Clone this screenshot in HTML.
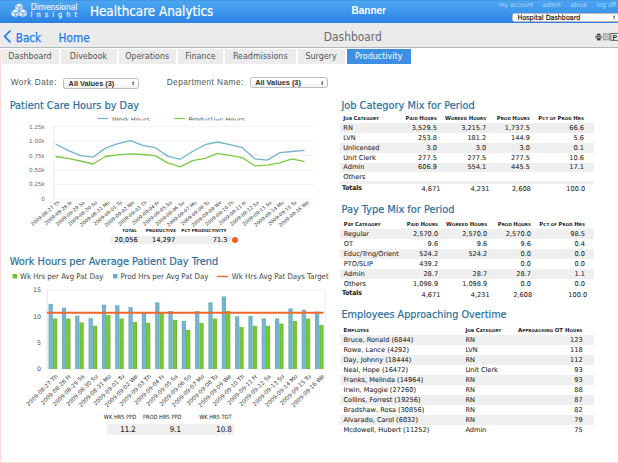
<!DOCTYPE html>
<html lang="en"><head><meta charset="utf-8"><title>Healthcare Analytics - Dashboard</title>
<style>
html,body{margin:0;padding:0;background:#fff;}
body{width:618px;height:463px;overflow:hidden;position:relative;font-family:'DejaVu Sans', 'Liberation Sans', sans-serif;color:#333;}
#page{position:absolute;left:0;top:0;width:618px;height:463px;overflow:hidden;background:#fff;}
#page *{box-sizing:border-box;}
.abs{position:absolute;white-space:nowrap;}
#top{position:absolute;left:0;top:0;width:618px;height:22.5px;background:linear-gradient(#3f8fe0 0,#4ba6f0 1.2px,#3c95eb 55%,#2b7fe1);}
#bar{position:absolute;left:0;top:22.5px;width:618px;height:25.5px;background:#ebebeb;border-bottom:1.6px solid #aebabb;}
#frame{position:absolute;left:0;top:50px;width:618px;height:413px;border-left:1.2px solid #fcdada;border-bottom:1.5px solid #fddcdc;}
.tab{position:absolute;top:49px;height:15px;background:#ececec;color:#555;font-family:'DejaVu Sans Condensed','DejaVu Sans',sans-serif;font-stretch:condensed;font-size:8.9px;line-height:15px;text-align:center;white-space:nowrap;}
.tab.on{background:#3d8fe3;color:#fff;}
.ttl{position:absolute;white-space:nowrap;color:#2a6f9f;font-family:'DejaVu Sans Condensed','DejaVu Sans',sans-serif;font-stretch:condensed;font-size:10.9px;line-height:14px;-webkit-text-stroke:0.2px #2a6f9f;}
.c{position:absolute;white-space:nowrap;line-height:10px;color:#2c2c2c;-webkit-text-stroke:0.08px #2c2c2c;}
.r{text-align:right;}
.b{font-weight:bold;color:#222;}
.k{color:#222;-webkit-text-stroke:0.12px #222;}
.h{position:absolute;white-space:nowrap;font-weight:bold;color:#222;font-size:4.1px;line-height:8px;text-transform:uppercase;letter-spacing:0.05px;}
.h b{font-size:5.4px;font-weight:bold;}
.st{position:absolute;background:#efefef;}
.sel{position:absolute;background:#fff;border:0.8px solid #bcbcbc;border-radius:2.5px;font-family:'Liberation Sans', sans-serif;color:#2e2e2e;white-space:nowrap;}
svg text{font-family:'DejaVu Sans', 'Liberation Sans', sans-serif;}
svg text.lg{font-family:'DejaVu Sans Condensed', 'DejaVu Sans', sans-serif;font-stretch:condensed;}
</style></head><body><div id="page">
<div id="top">
  <svg class="abs" style="left:10.6px;top:3.4px" width="16.4" height="15" viewBox="0 0 16.4 15"><g stroke="#3a86e6" stroke-width="0.45" stroke-linejoin="round"><path d="M8.2 0.2 L12.399999999999999 2.3000000000000003 L8.2 4.4 L3.999999999999999 2.3000000000000003Z" fill="#f4f9ff"/><path d="M3.999999999999999 2.3000000000000003 L8.2 4.4 L8.2 8.8 L3.999999999999999 6.700000000000001Z" fill="#dbeaff"/><path d="M12.399999999999999 2.3000000000000003 L8.2 4.4 L8.2 8.8 L12.399999999999999 6.700000000000001Z" fill="#b9d6fa"/><path d="M4.4 6 L8.600000000000001 8.1 L4.4 10.2 L0.20000000000000018 8.1Z" fill="#f4f9ff"/><path d="M0.20000000000000018 8.1 L4.4 10.2 L4.4 14.6 L0.20000000000000018 12.5Z" fill="#dbeaff"/><path d="M8.600000000000001 8.1 L4.4 10.2 L4.4 14.6 L8.600000000000001 12.5Z" fill="#b9d6fa"/><path d="M12 6 L16.2 8.1 L12 10.2 L7.8 8.1Z" fill="#f4f9ff"/><path d="M7.8 8.1 L12 10.2 L12 14.6 L7.8 12.5Z" fill="#dbeaff"/><path d="M16.2 8.1 L12 10.2 L12 14.6 L16.2 12.5Z" fill="#b9d6fa"/></g></svg>
  <div class="abs" style="left:30.7px;top:2.8px;font-family:'DejaVu Sans Condensed', 'DejaVu Sans', sans-serif;font-stretch:condensed;font-size:8.4px;line-height:9px;color:#e6f1ff;-webkit-text-stroke:0.2px #e6f1ff">Dimensional</div>
  <div class="abs" style="left:30.5px;top:10.3px;font-family:'DejaVu Sans Condensed', 'DejaVu Sans', sans-serif;font-stretch:condensed;font-size:7.4px;line-height:9px;color:#e6f1ff;letter-spacing:4px;-webkit-text-stroke:0.2px #e6f1ff">Insight</div>
  <div class="abs" style="left:90px;top:2.8px;font-family:'DejaVu Sans Condensed', 'DejaVu Sans', sans-serif;font-stretch:condensed;font-size:13.3px;line-height:18px;color:#fff;-webkit-text-stroke:0.2px #fff">Healthcare Analytics</div>
  <div class="abs" style="left:351.5px;top:4px;font-family:'Liberation Sans', sans-serif;font-size:10px;line-height:13px;color:#fff;font-weight:bold">Banner</div>
  <div class="abs" style="left:499px;top:1px;font-family:'DejaVu Sans Condensed', 'DejaVu Sans', sans-serif;font-stretch:condensed;font-size:6.45px;line-height:9px;color:#b4d6ff">my account</div><div class="abs" style="left:542.6px;top:1px;font-family:'DejaVu Sans Condensed', 'DejaVu Sans', sans-serif;font-stretch:condensed;font-size:6.45px;line-height:9px;color:#b4d6ff">admin</div><div class="abs" style="left:570.4px;top:1px;font-family:'DejaVu Sans Condensed', 'DejaVu Sans', sans-serif;font-stretch:condensed;font-size:6.45px;line-height:9px;color:#b4d6ff">about</div><div class="abs" style="left:596.5px;top:1px;font-family:'DejaVu Sans Condensed', 'DejaVu Sans', sans-serif;font-stretch:condensed;font-size:6.9px;line-height:9px;color:#b4d6ff">log off</div>
  <div class="sel" style="left:512px;top:12.6px;width:108px;height:9.2px;font-size:7.1px;line-height:7.2px;padding-left:4.6px;font-family:'DejaVu Sans Condensed', 'DejaVu Sans', sans-serif;font-stretch:condensed;font-weight:normal;color:#111;-webkit-text-stroke:0.18px #111">Hospital Dashboard<svg style="position:absolute;right:3.8px;top:1.6px" width="2.4" height="4.2" viewBox="0 0 3.2 5"><path d="M0 2 L1.6 0 L3.2 2Z M0 3 L1.6 5 L3.2 3Z" fill="#333"/></svg></div>
</div>
<div id="bar">
  <svg class="abs" style="left:2.5px;top:7.6px" width="9" height="13" viewBox="0 0 9 13"><path d="M7 1 L1.6 6.4 L7 11.8" fill="none" stroke="#1f7af0" stroke-width="1.7" stroke-linecap="round" stroke-linejoin="round"/></svg>
  <div class="abs" style="left:15.7px;top:8px;font-family:'DejaVu Sans Condensed', 'DejaVu Sans', sans-serif;font-stretch:condensed;font-size:11.7px;line-height:15px;color:#1f7af0;-webkit-text-stroke:0.25px #1f7af0">Back</div>
  <div class="abs" style="left:58.6px;top:8px;font-family:'DejaVu Sans Condensed', 'DejaVu Sans', sans-serif;font-stretch:condensed;font-size:11.7px;line-height:15px;color:#1f7af0;-webkit-text-stroke:0.25px #1f7af0">Home</div>
  <div class="abs" style="left:323.8px;top:6.3px;font-family:'DejaVu Sans Condensed', 'DejaVu Sans', sans-serif;font-stretch:condensed;font-size:11.9px;line-height:16px;color:#6a6a6a">Dashboard</div>
  <svg class="abs" style="left:595px;top:10.5px" width="24" height="9" viewBox="0 0 24 9">
    <rect x="2" y="0.7" width="3.5" height="1.7" fill="#333"/><path d="M1.2 2.5 H6 L6.9 3.6 V5.6 H0.3 V3.6Z" fill="#6e6e6e"/><rect x="1.2" y="3.9" width="4.8" height="0.8" fill="#a6a6a6"/><rect x="2" y="5.4" width="3.5" height="2" fill="#333"/>
    <rect x="7.9" y="0.2" width="7.2" height="7.2" fill="#a2a2a2"/><rect x="9.2" y="1.5" width="4.6" height="4.6" fill="#d9d9d9"/><path d="M9.4 1.7 l4.2 4.2 M13.6 1.7 l-4.2 4.2" stroke="#9a9a9a" stroke-width="0.9"/>
    <rect x="15.9" y="0.5" width="9" height="6.8" fill="#fbfbfb" stroke="#3a3a3a" stroke-width="0.8"/>
    <text x="17.6" y="6.5" font-size="7" font-weight="bold" fill="#2a2a2a" style="font-family:'Liberation Sans', sans-serif">P</text>
  </svg>
</div>
<div id="frame"></div>
<div class="tab" style="left:1.5px;width:57px">Dashboard</div>
<div class="tab" style="left:60.5px;width:56px">Divebook</div>
<div class="tab" style="left:118.5px;width:57.5px">Operations</div>
<div class="tab" style="left:178px;width:45px">Finance</div>
<div class="tab" style="left:225px;width:70.5px">Readmissions</div>
<div class="tab" style="left:297.5px;width:47px">Surgery</div>
<div class="tab on" style="left:347px;width:63.5px">Productivity</div>

<div class="abs" style="left:10.7px;top:77px;font-family:'Liberation Sans', sans-serif;font-size:8.3px;line-height:10px;color:#555;letter-spacing:0.5px">Work Date:</div>
<div class="sel" style="left:63.4px;top:77.5px;width:75.3px;height:11.1px;font-size:7.35px;line-height:9.6px;padding-left:4.2px;font-family:'Liberation Sans', sans-serif;font-weight:bold;background:linear-gradient(#fff 45%,#f1f1f1)">All Values (3)<svg style="position:absolute;right:3.6px;top:2.6px" width="2.6" height="4.4" viewBox="0 0 3.2 5"><path d="M0 2 L1.6 0 L3.2 2Z M0 3 L1.6 5 L3.2 3Z" fill="#333"/></svg></div>
<div class="abs" style="left:166.7px;top:77px;font-family:'Liberation Sans', sans-serif;font-size:8.3px;line-height:10px;color:#555;letter-spacing:0.43px">Department Name:</div>
<div class="sel" style="left:250px;top:77px;width:77.7px;height:11px;font-size:7.35px;line-height:9.5px;padding-left:4.2px;font-family:'Liberation Sans', sans-serif;font-weight:bold;background:linear-gradient(#fff 45%,#f1f1f1)">All Values (3)<svg style="position:absolute;right:3.4px;top:2.5px" width="2.6" height="4.4" viewBox="0 0 3.2 5"><path d="M0 2 L1.6 0 L3.2 2Z M0 3 L1.6 5 L3.2 3Z" fill="#333"/></svg></div>

<div class="ttl" style="left:9.7px;top:99.1px">Patient Care Hours by Day</div>
<div class="ttl" style="left:9.7px;top:255.3px">Work Hours per Average Patient Day Trend</div>
<div class="ttl" style="left:341.4px;top:99.1px">Job Category Mix for Period</div>
<div class="ttl" style="left:341.5px;top:203.2px">Pay Type Mix for Period</div>
<div class="ttl" style="left:341.5px;top:308.2px;font-size:10.75px">Employees Approaching Overtime</div>

<svg class="abs" style="left:0;top:0" width="618" height="463" viewBox="0 0 618 463">
<defs>
<clipPath id="lc"><rect x="90" y="110" width="200" height="10.4"/></clipPath>
<linearGradient id="gb" x1="0" x2="1" y1="0" y2="0"><stop offset="0" stop-color="#66a9c3"/><stop offset="0.5" stop-color="#7dbad2"/><stop offset="1" stop-color="#66a9c3"/></linearGradient>
<linearGradient id="gg" x1="0" x2="1" y1="0" y2="0"><stop offset="0" stop-color="#62bb28"/><stop offset="0.5" stop-color="#7acd40"/><stop offset="1" stop-color="#62bb28"/></linearGradient>
</defs>
<line x1="53.9" y1="126.6" x2="313.7" y2="126.6" stroke="#f0f0f0" stroke-width="0.9"/>
<text x="44.8" y="128.6" text-anchor="end" font-size="5.6" fill="#666">1.25k</text>
<line x1="53.9" y1="141.0" x2="313.7" y2="141.0" stroke="#f0f0f0" stroke-width="0.9"/>
<text x="44.8" y="143.0" text-anchor="end" font-size="5.6" fill="#666">1.00k</text>
<line x1="53.9" y1="155.5" x2="313.7" y2="155.5" stroke="#f0f0f0" stroke-width="0.9"/>
<text x="44.8" y="157.5" text-anchor="end" font-size="5.6" fill="#666">0.75k</text>
<line x1="53.9" y1="169.9" x2="313.7" y2="169.9" stroke="#f0f0f0" stroke-width="0.9"/>
<text x="44.8" y="171.9" text-anchor="end" font-size="5.6" fill="#666">0.50k</text>
<line x1="53.9" y1="184.4" x2="313.7" y2="184.4" stroke="#f0f0f0" stroke-width="0.9"/>
<text x="44.8" y="186.4" text-anchor="end" font-size="5.6" fill="#666">0.25k</text>
<line x1="53.9" y1="198.8" x2="313.7" y2="198.8" stroke="#f0f0f0" stroke-width="0.9"/>
<text x="44.8" y="200.8" text-anchor="end" font-size="5.6" fill="#666">0</text>
<line x1="53.9" y1="126.2" x2="53.9" y2="199.2" stroke="#e6e6e6" stroke-width="0.9"/>
<polyline points="55.6,144.0 68.0,150.4 80.5,155.6 92.9,157.2 105.4,148.1 117.8,143.6 130.3,140.6 142.8,145.4 155.2,147.7 167.7,156.1 180.1,159.3 192.5,151.5 205.0,144.7 217.4,142.0 229.9,144.7 242.3,147.7 254.8,158.8 267.2,160.1 279.7,152.7 292.1,151.5 304.6,150.4" fill="none" stroke="#70b3ce" stroke-width="1.3" stroke-linejoin="round"/>
<polyline points="55.6,156.5 68.0,158.3 80.5,161.0 92.9,164.0 105.4,156.5 117.8,154.9 130.3,153.8 142.8,154.5 155.2,155.6 167.7,162.9 180.1,166.8 192.5,160.6 205.0,158.3 217.4,153.3 229.9,155.4 242.3,157.6 254.8,165.8 267.2,165.1 279.7,162.9 292.1,158.8 304.6,161.7" fill="none" stroke="#7bca44" stroke-width="1.3" stroke-linejoin="round"/>
<line x1="97.3" y1="118.5" x2="108.1" y2="118.5" stroke="#72b4cf" stroke-width="1.2"/>
<text x="112" y="121.6" font-size="6.6" fill="#555" clip-path="url(#lc)">Work Hours</text>
<line x1="174.2" y1="118.5" x2="185.3" y2="118.5" stroke="#7ccb45" stroke-width="1.2"/>
<text x="188.4" y="121.6" font-size="6.6" fill="#555" clip-path="url(#lc)">Productive Hours</text>
<text transform="translate(60.2,203.1) rotate(-40)" text-anchor="end" font-size="4.9" fill="#3c3c3c">2009-08-27 Th</text>
<text transform="translate(72.6,203.1) rotate(-40)" text-anchor="end" font-size="4.9" fill="#3c3c3c">2009-08-28 Fr</text>
<text transform="translate(85.1,203.1) rotate(-40)" text-anchor="end" font-size="4.9" fill="#3c3c3c">2009-08-29 Sa</text>
<text transform="translate(97.5,203.1) rotate(-40)" text-anchor="end" font-size="4.9" fill="#3c3c3c">2009-08-30 Su</text>
<text transform="translate(110.0,203.1) rotate(-40)" text-anchor="end" font-size="4.9" fill="#3c3c3c">2009-08-31 Mo</text>
<text transform="translate(122.4,203.1) rotate(-40)" text-anchor="end" font-size="4.9" fill="#3c3c3c">2009-09-01 Tu</text>
<text transform="translate(134.9,203.1) rotate(-40)" text-anchor="end" font-size="4.9" fill="#3c3c3c">2009-09-02 We</text>
<text transform="translate(147.3,203.1) rotate(-40)" text-anchor="end" font-size="4.9" fill="#3c3c3c">2009-09-03 Th</text>
<text transform="translate(159.8,203.1) rotate(-40)" text-anchor="end" font-size="4.9" fill="#3c3c3c">2009-09-04 Fr</text>
<text transform="translate(172.2,203.1) rotate(-40)" text-anchor="end" font-size="4.9" fill="#3c3c3c">2009-09-05 Sa</text>
<text transform="translate(184.7,203.1) rotate(-40)" text-anchor="end" font-size="4.9" fill="#3c3c3c">2009-09-06 Su</text>
<text transform="translate(197.1,203.1) rotate(-40)" text-anchor="end" font-size="4.9" fill="#3c3c3c">2009-09-07 Mo</text>
<text transform="translate(209.6,203.1) rotate(-40)" text-anchor="end" font-size="4.9" fill="#3c3c3c">2009-09-08 Tu</text>
<text transform="translate(222.0,203.1) rotate(-40)" text-anchor="end" font-size="4.9" fill="#3c3c3c">2009-09-09 We</text>
<text transform="translate(234.5,203.1) rotate(-40)" text-anchor="end" font-size="4.9" fill="#3c3c3c">2009-09-10 Th</text>
<text transform="translate(246.9,203.1) rotate(-40)" text-anchor="end" font-size="4.9" fill="#3c3c3c">2009-09-11 Fr</text>
<text transform="translate(259.4,203.1) rotate(-40)" text-anchor="end" font-size="4.9" fill="#3c3c3c">2009-09-12 Sa</text>
<text transform="translate(271.9,203.1) rotate(-40)" text-anchor="end" font-size="4.9" fill="#3c3c3c">2009-09-13 Su</text>
<text transform="translate(284.3,203.1) rotate(-40)" text-anchor="end" font-size="4.9" fill="#3c3c3c">2009-09-14 Mo</text>
<text transform="translate(296.8,203.1) rotate(-40)" text-anchor="end" font-size="4.9" fill="#3c3c3c">2009-09-15 Tu</text>
<text transform="translate(309.2,203.1) rotate(-40)" text-anchor="end" font-size="4.9" fill="#3c3c3c">2009-09-16 We</text>
<line x1="47" y1="290" x2="325" y2="290" stroke="#efefef" stroke-width="0.9"/>
<text x="41" y="292.3" text-anchor="end" font-size="6.3" fill="#444">15</text>
<line x1="47" y1="316.4" x2="325" y2="316.4" stroke="#efefef" stroke-width="0.9"/>
<text x="41" y="318.7" text-anchor="end" font-size="6.3" fill="#444">10</text>
<line x1="47" y1="342.7" x2="325" y2="342.7" stroke="#efefef" stroke-width="0.9"/>
<text x="41" y="345.0" text-anchor="end" font-size="6.3" fill="#444">5</text>
<line x1="47" y1="369" x2="325" y2="369" stroke="#efefef" stroke-width="0.9"/>
<text x="41" y="371.3" text-anchor="end" font-size="6.3" fill="#444">0</text>
<line x1="47" y1="290" x2="47" y2="369" stroke="#e2e2e2" stroke-width="1"/>
<line x1="325" y1="290" x2="325" y2="369" stroke="#ececec" stroke-width="0.9"/>
<rect x="48.6" y="303.9" width="4.2" height="65.1" fill="url(#gb)"/>
<rect x="52.9" y="318.5" width="4.2" height="50.5" fill="url(#gg)"/>
<rect x="61.9" y="307.6" width="4.2" height="61.4" fill="url(#gb)"/>
<rect x="66.2" y="318.5" width="4.2" height="50.5" fill="url(#gg)"/>
<rect x="75.2" y="315.6" width="4.2" height="53.4" fill="url(#gb)"/>
<rect x="79.5" y="322.3" width="4.2" height="46.7" fill="url(#gg)"/>
<rect x="88.6" y="318" width="4.2" height="51.0" fill="url(#gb)"/>
<rect x="92.9" y="325.8" width="4.2" height="43.2" fill="url(#gg)"/>
<rect x="101.9" y="304.7" width="4.2" height="64.3" fill="url(#gb)"/>
<rect x="106.2" y="315.1" width="4.2" height="53.9" fill="url(#gg)"/>
<rect x="115.2" y="305.2" width="4.2" height="63.8" fill="url(#gb)"/>
<rect x="119.5" y="318.5" width="4.2" height="50.5" fill="url(#gg)"/>
<rect x="128.5" y="307.1" width="4.2" height="61.9" fill="url(#gb)"/>
<rect x="132.8" y="321.8" width="4.2" height="47.2" fill="url(#gg)"/>
<rect x="141.8" y="313.2" width="4.2" height="55.8" fill="url(#gb)"/>
<rect x="146.1" y="322.8" width="4.2" height="46.2" fill="url(#gg)"/>
<rect x="155.2" y="302.3" width="4.2" height="66.7" fill="url(#gb)"/>
<rect x="159.5" y="313.2" width="4.2" height="55.8" fill="url(#gg)"/>
<rect x="168.5" y="311" width="4.2" height="58.0" fill="url(#gb)"/>
<rect x="172.8" y="319.9" width="4.2" height="49.1" fill="url(#gg)"/>
<rect x="181.8" y="321" width="4.2" height="48.0" fill="url(#gb)"/>
<rect x="186.1" y="329.8" width="4.2" height="39.2" fill="url(#gg)"/>
<rect x="195.1" y="311" width="4.2" height="58.0" fill="url(#gb)"/>
<rect x="199.4" y="323" width="4.2" height="46.0" fill="url(#gg)"/>
<rect x="208.4" y="302.3" width="4.2" height="66.7" fill="url(#gb)"/>
<rect x="212.7" y="318.5" width="4.2" height="50.5" fill="url(#gg)"/>
<rect x="221.8" y="296.4" width="4.2" height="72.6" fill="url(#gb)"/>
<rect x="226.1" y="311" width="4.2" height="58.0" fill="url(#gg)"/>
<rect x="235.1" y="316.4" width="4.2" height="52.6" fill="url(#gb)"/>
<rect x="239.4" y="327" width="4.2" height="42.0" fill="url(#gg)"/>
<rect x="248.4" y="315.9" width="4.2" height="53.1" fill="url(#gb)"/>
<rect x="252.7" y="325.8" width="4.2" height="43.2" fill="url(#gg)"/>
<rect x="261.7" y="318.3" width="4.2" height="50.7" fill="url(#gb)"/>
<rect x="266.0" y="325.8" width="4.2" height="43.2" fill="url(#gg)"/>
<rect x="275.0" y="318.3" width="4.2" height="50.7" fill="url(#gb)"/>
<rect x="279.3" y="323.6" width="4.2" height="45.4" fill="url(#gg)"/>
<rect x="288.4" y="308.4" width="4.2" height="60.6" fill="url(#gb)"/>
<rect x="292.7" y="321" width="4.2" height="48.0" fill="url(#gg)"/>
<rect x="301.7" y="309.7" width="4.2" height="59.3" fill="url(#gb)"/>
<rect x="306.0" y="318.5" width="4.2" height="50.5" fill="url(#gg)"/>
<rect x="315.0" y="311.6" width="4.2" height="57.4" fill="url(#gb)"/>
<rect x="319.3" y="325" width="4.2" height="44.0" fill="url(#gg)"/>
<line x1="47" y1="312.8" x2="323.5" y2="312.8" stroke="#f2672a" stroke-width="2"/>
<rect x="12.5" y="274" width="4.5" height="4.5" fill="#6cc232"/>
<text x="20" y="279.2" font-size="7.8" fill="#444" class="lg">Wk Hrs per Avg Pat Day</text>
<rect x="113" y="274" width="4.5" height="4.5" fill="#6fb0c8"/>
<text x="120.5" y="279.2" font-size="7.8" fill="#444" class="lg">Prod Hrs per Avg Pat Day</text>
<line x1="217" y1="276.5" x2="228" y2="276.5" stroke="#f26a2a" stroke-width="1.4"/>
<text x="231.8" y="279.2" font-size="7.8" fill="#444" class="lg">Wk Hrs Avg Pat Days Target</text>
<text transform="translate(58.2,376.8) rotate(-45)" text-anchor="end" font-size="5.7" fill="#3a3a3a">2009-08-27 Th</text>
<text transform="translate(71.5,376.8) rotate(-45)" text-anchor="end" font-size="5.7" fill="#3a3a3a">2009-08-28 Fr</text>
<text transform="translate(84.8,376.8) rotate(-45)" text-anchor="end" font-size="5.7" fill="#3a3a3a">2009-08-29 Sa</text>
<text transform="translate(98.2,376.8) rotate(-45)" text-anchor="end" font-size="5.7" fill="#3a3a3a">2009-08-30 Su</text>
<text transform="translate(111.5,376.8) rotate(-45)" text-anchor="end" font-size="5.7" fill="#3a3a3a">2009-08-31 Mo</text>
<text transform="translate(124.8,376.8) rotate(-45)" text-anchor="end" font-size="5.7" fill="#3a3a3a">2009-09-01 Tu</text>
<text transform="translate(138.1,376.8) rotate(-45)" text-anchor="end" font-size="5.7" fill="#3a3a3a">2009-09-02 We</text>
<text transform="translate(151.4,376.8) rotate(-45)" text-anchor="end" font-size="5.7" fill="#3a3a3a">2009-09-03 Th</text>
<text transform="translate(164.8,376.8) rotate(-45)" text-anchor="end" font-size="5.7" fill="#3a3a3a">2009-09-04 Fr</text>
<text transform="translate(178.1,376.8) rotate(-45)" text-anchor="end" font-size="5.7" fill="#3a3a3a">2009-09-05 Sa</text>
<text transform="translate(191.4,376.8) rotate(-45)" text-anchor="end" font-size="5.7" fill="#3a3a3a">2009-09-06 Su</text>
<text transform="translate(204.7,376.8) rotate(-45)" text-anchor="end" font-size="5.7" fill="#3a3a3a">2009-09-07 Mo</text>
<text transform="translate(218.0,376.8) rotate(-45)" text-anchor="end" font-size="5.7" fill="#3a3a3a">2009-09-08 Tu</text>
<text transform="translate(231.4,376.8) rotate(-45)" text-anchor="end" font-size="5.7" fill="#3a3a3a">2009-09-09 We</text>
<text transform="translate(244.7,376.8) rotate(-45)" text-anchor="end" font-size="5.7" fill="#3a3a3a">2009-09-10 Th</text>
<text transform="translate(258.0,376.8) rotate(-45)" text-anchor="end" font-size="5.7" fill="#3a3a3a">2009-09-11 Fr</text>
<text transform="translate(271.3,376.8) rotate(-45)" text-anchor="end" font-size="5.7" fill="#3a3a3a">2009-09-12 Sa</text>
<text transform="translate(284.6,376.8) rotate(-45)" text-anchor="end" font-size="5.7" fill="#3a3a3a">2009-09-13 Su</text>
<text transform="translate(298.0,376.8) rotate(-45)" text-anchor="end" font-size="5.7" fill="#3a3a3a">2009-09-14 Mo</text>
<text transform="translate(311.3,376.8) rotate(-45)" text-anchor="end" font-size="5.7" fill="#3a3a3a">2009-09-15 Tu</text>
<text transform="translate(324.6,376.8) rotate(-45)" text-anchor="end" font-size="5.7" fill="#3a3a3a">2009-09-16 We</text>
</svg>

<!-- KPI strip 1 -->
<div class="st" style="left:109.7px;top:235.8px;width:121.3px;height:8.2px"></div>
<span class="h r" style="left:37px;width:100px;top:227px">Total</span>
<span class="h r" style="left:76px;width:100px;top:227px">Productive</span>
<span class="h r" style="left:126.5px;width:100px;top:227px">Pct Productivity</span>
<span class="c r k" style="left:57.6px;width:80px;top:234.9px;font-size:6.6px">20,056</span>
<span class="c r k" style="left:95.2px;width:80px;top:234.9px;font-size:6.6px">14,297</span>
<span class="c r k" style="left:147.4px;width:80px;top:234.9px;font-size:6.6px">71.3</span>
<div class="abs" style="left:231.7px;top:237.3px;width:5.9px;height:5.3px;border-radius:50%;background:#f2622a"></div>

<!-- KPI strip 2 -->
<div class="st" style="left:107.1px;top:424.4px;width:126.7px;height:10.9px"></div>
<span class="h r" style="left:36.3px;width:100px;top:412.9px;font-size:5.7px;font-weight:normal;font-family:'DejaVu Sans Condensed', 'DejaVu Sans', sans-serif;font-stretch:condensed;letter-spacing:0">WK HRS PPD</span>
<span class="h r" style="left:81.5px;width:100px;top:412.9px;font-size:5.7px;font-weight:normal;font-family:'DejaVu Sans Condensed', 'DejaVu Sans', sans-serif;font-stretch:condensed;letter-spacing:0">PROD HRS PPD</span>
<span class="h r" style="left:131.5px;width:100px;top:412.9px;font-size:5.7px;font-weight:normal;font-family:'DejaVu Sans Condensed', 'DejaVu Sans', sans-serif;font-stretch:condensed;letter-spacing:0">WK HRS TGT</span>
<span class="c r" style="left:55.8px;width:80px;top:425px;font-size:7.8px;color:#222;font-family:'DejaVu Sans Condensed', 'DejaVu Sans', sans-serif;font-stretch:condensed">11.2</span>
<span class="c r" style="left:101px;width:80px;top:425px;font-size:7.8px;color:#222;font-family:'DejaVu Sans Condensed', 'DejaVu Sans', sans-serif;font-stretch:condensed">9.1</span>
<span class="c r" style="left:151.8px;width:80px;top:425px;font-size:7.8px;color:#222;font-family:'DejaVu Sans Condensed', 'DejaVu Sans', sans-serif;font-stretch:condensed">10.8</span>

<!-- Job Category table -->
<span class="h" style="left:343.3px;top:113.6px"><b>J</b>ob <b>C</b>ategory</span>
<span class="h r" style="left:337px;width:100px;top:113.6px"><b>P</b>aid <b>H</b>ours</span>
<span class="h r" style="left:386.3px;width:100px;top:113.6px"><b>W</b>orked <b>H</b>ours</span>
<span class="h r" style="left:430px;width:100px;top:113.6px"><b>P</b>rod <b>H</b>ours</span>
<span class="h r" style="left:484px;width:100px;top:113.6px"><b>P</b>ct of <b>P</b>rod <b>H</b>rs</span>
<div class="st" style="left:340px;top:122.8px;width:253.5px;height:9.9px"></div>
<span class="c" style="left:343.3px;top:122.8px;font-size:6.6px">RN</span>
<span class="c r" style="left:357px;width:80px;top:122.8px;font-size:6.6px">3,529.5</span>
<span class="c r" style="left:406.3px;width:80px;top:122.8px;font-size:6.6px">3,215.7</span>
<span class="c r" style="left:450px;width:80px;top:122.8px;font-size:6.6px">1,737.5</span>
<span class="c r" style="left:504px;width:80px;top:122.8px;font-size:6.6px">66.6</span>
<span class="c" style="left:343.3px;top:132.7px;font-size:6.6px">LVN</span>
<span class="c r" style="left:357px;width:80px;top:132.7px;font-size:6.6px">253.8</span>
<span class="c r" style="left:406.3px;width:80px;top:132.7px;font-size:6.6px">181.2</span>
<span class="c r" style="left:450px;width:80px;top:132.7px;font-size:6.6px">144.9</span>
<span class="c r" style="left:504px;width:80px;top:132.7px;font-size:6.6px">5.6</span>
<div class="st" style="left:340px;top:142.7px;width:253.5px;height:9.9px"></div>
<span class="c" style="left:343.3px;top:142.6px;font-size:6.6px">Unlicensed</span>
<span class="c r" style="left:357px;width:80px;top:142.6px;font-size:6.6px">3.0</span>
<span class="c r" style="left:406.3px;width:80px;top:142.6px;font-size:6.6px">3.0</span>
<span class="c r" style="left:450px;width:80px;top:142.6px;font-size:6.6px">3.0</span>
<span class="c r" style="left:504px;width:80px;top:142.6px;font-size:6.6px">0.1</span>
<span class="c" style="left:343.3px;top:152.5px;font-size:6.6px">Unit Clerk</span>
<span class="c r" style="left:357px;width:80px;top:152.5px;font-size:6.6px">277.5</span>
<span class="c r" style="left:406.3px;width:80px;top:152.5px;font-size:6.6px">277.5</span>
<span class="c r" style="left:450px;width:80px;top:152.5px;font-size:6.6px">277.5</span>
<span class="c r" style="left:504px;width:80px;top:152.5px;font-size:6.6px">10.6</span>
<div class="st" style="left:340px;top:162.5px;width:253.5px;height:9.9px"></div>
<span class="c" style="left:343.3px;top:162.4px;font-size:6.6px">Admin</span>
<span class="c r" style="left:357px;width:80px;top:162.4px;font-size:6.6px">606.9</span>
<span class="c r" style="left:406.3px;width:80px;top:162.4px;font-size:6.6px">554.1</span>
<span class="c r" style="left:450px;width:80px;top:162.4px;font-size:6.6px">445.5</span>
<span class="c r" style="left:504px;width:80px;top:162.4px;font-size:6.6px">17.1</span>
<span class="c" style="left:343.3px;top:172.3px;font-size:6.6px">Others</span>
<div class="st" style="left:340px;top:181px;width:253.5px;height:2.6px"></div>
<span class="c b" style="left:342px;top:183.0px;font-size:6.7px;font-family:'DejaVu Sans Condensed', 'DejaVu Sans', sans-serif;font-stretch:condensed">Totals</span>
<span class="c r" style="left:360.4px;width:80px;top:184.3px;font-size:6.6px">4,671</span>
<span class="c r" style="left:409.4px;width:80px;top:184.3px;font-size:6.6px">4,231</span>
<span class="c r" style="left:450.79999999999995px;width:80px;top:184.3px;font-size:6.6px">2,608</span>
<span class="c r" style="left:505.20000000000005px;width:80px;top:184.3px;font-size:6.6px">100.0</span>

<!-- Pay Type table -->
<span class="h" style="left:343.7px;top:219.9px"><b>P</b>ay <b>C</b>ategory</span>
<span class="h r" style="left:338.1px;width:100px;top:219.9px"><b>P</b>aid <b>H</b>ours</span>
<span class="h r" style="left:387.3px;width:100px;top:219.9px"><b>W</b>orked <b>H</b>ours</span>
<span class="h r" style="left:431px;width:100px;top:219.9px"><b>P</b>rod <b>H</b>ours</span>
<span class="h r" style="left:485px;width:100px;top:219.9px"><b>P</b>ct of <b>P</b>rod <b>H</b>rs</span>
<div class="st" style="left:340px;top:228.8px;width:253.5px;height:10.0px"></div>
<span class="c" style="left:343.7px;top:228.8px;font-size:6.6px">Regular</span>
<span class="c r" style="left:358.1px;width:80px;top:228.8px;font-size:6.6px">2,570.0</span>
<span class="c r" style="left:407.3px;width:80px;top:228.8px;font-size:6.6px">2,570.0</span>
<span class="c r" style="left:451px;width:80px;top:228.8px;font-size:6.6px">2,570.0</span>
<span class="c r" style="left:505px;width:80px;top:228.8px;font-size:6.6px">98.5</span>
<span class="c" style="left:343.7px;top:238.8px;font-size:6.6px">OT</span>
<span class="c r" style="left:358.1px;width:80px;top:238.8px;font-size:6.6px">9.6</span>
<span class="c r" style="left:407.3px;width:80px;top:238.8px;font-size:6.6px">9.6</span>
<span class="c r" style="left:451px;width:80px;top:238.8px;font-size:6.6px">9.6</span>
<span class="c r" style="left:505px;width:80px;top:238.8px;font-size:6.6px">0.4</span>
<div class="st" style="left:340px;top:248.8px;width:253.5px;height:10.0px"></div>
<span class="c" style="left:343.7px;top:248.8px;font-size:6.6px">Educ/Trng/Orient</span>
<span class="c r" style="left:358.1px;width:80px;top:248.8px;font-size:6.6px">524.2</span>
<span class="c r" style="left:407.3px;width:80px;top:248.8px;font-size:6.6px">524.2</span>
<span class="c r" style="left:451px;width:80px;top:248.8px;font-size:6.6px">0.0</span>
<span class="c r" style="left:505px;width:80px;top:248.8px;font-size:6.6px">0.0</span>
<span class="c" style="left:343.7px;top:258.8px;font-size:6.6px">PTO/SLIP</span>
<span class="c r" style="left:358.1px;width:80px;top:258.8px;font-size:6.6px">439.2</span>
<span class="c r" style="left:451px;width:80px;top:258.8px;font-size:6.6px">0.0</span>
<span class="c r" style="left:505px;width:80px;top:258.8px;font-size:6.6px">0.0</span>
<div class="st" style="left:340px;top:268.8px;width:253.5px;height:10.0px"></div>
<span class="c" style="left:343.7px;top:268.8px;font-size:6.6px">Admin</span>
<span class="c r" style="left:358.1px;width:80px;top:268.8px;font-size:6.6px">28.7</span>
<span class="c r" style="left:407.3px;width:80px;top:268.8px;font-size:6.6px">28.7</span>
<span class="c r" style="left:451px;width:80px;top:268.8px;font-size:6.6px">28.7</span>
<span class="c r" style="left:505px;width:80px;top:268.8px;font-size:6.6px">1.1</span>
<span class="c" style="left:343.7px;top:278.8px;font-size:6.6px">Others</span>
<span class="c r" style="left:358.1px;width:80px;top:278.8px;font-size:6.6px">1,098.9</span>
<span class="c r" style="left:407.3px;width:80px;top:278.8px;font-size:6.6px">1,098.9</span>
<span class="c r" style="left:451px;width:80px;top:278.8px;font-size:6.6px">0.0</span>
<span class="c r" style="left:505px;width:80px;top:278.8px;font-size:6.6px">0.0</span>
<span class="c b" style="left:342px;top:288.2px;font-size:6.7px;font-family:'DejaVu Sans Condensed', 'DejaVu Sans', sans-serif;font-stretch:condensed">Totals</span>
<span class="c r" style="left:360.4px;width:80px;top:289.5px;font-size:6.6px">4,671</span>
<span class="c r" style="left:409.6px;width:80px;top:289.5px;font-size:6.6px">4,231</span>
<span class="c r" style="left:452.20000000000005px;width:80px;top:289.5px;font-size:6.6px">2,608</span>
<span class="c r" style="left:507.20000000000005px;width:80px;top:289.5px;font-size:6.6px">100.0</span>

<!-- Employees table -->
<span class="h" style="left:343.5px;top:326.3px"><b>E</b>mployee</span>
<span class="h" style="left:465.4px;top:326.3px"><b>J</b>ob <b>C</b>ategory</span>
<span class="h r" style="left:482.6px;width:100px;top:326.3px"><b>A</b>pproaching <b>OT H</b>ours</span>
<div class="st" style="left:340px;top:335.0px;width:253.79999999999995px;height:10.0px"></div>
<span class="c" style="left:343.5px;top:335.0px;font-size:6.6px">Bruce, Ronald (6844)</span>
<span class="c" style="left:465.4px;top:335.0px;font-size:6.6px">RN</span>
<span class="c r" style="left:502.6px;width:80px;top:335.0px;font-size:6.6px">123</span>
<span class="c" style="left:343.5px;top:345.0px;font-size:6.6px">Rowe, Lance (4292)</span>
<span class="c" style="left:465.4px;top:345.0px;font-size:6.6px">LVN</span>
<span class="c r" style="left:502.6px;width:80px;top:345.0px;font-size:6.6px">118</span>
<div class="st" style="left:340px;top:355.0px;width:253.79999999999995px;height:10.0px"></div>
<span class="c" style="left:343.5px;top:355.0px;font-size:6.6px">Day, Johnny (18444)</span>
<span class="c" style="left:465.4px;top:355.0px;font-size:6.6px">RN</span>
<span class="c r" style="left:502.6px;width:80px;top:355.0px;font-size:6.6px">112</span>
<span class="c" style="left:343.5px;top:365.0px;font-size:6.6px">Neal, Hope (16472)</span>
<span class="c" style="left:465.4px;top:365.0px;font-size:6.6px">Unit Clerk</span>
<span class="c r" style="left:502.6px;width:80px;top:365.0px;font-size:6.6px">93</span>
<div class="st" style="left:340px;top:375.0px;width:253.79999999999995px;height:10.0px"></div>
<span class="c" style="left:343.5px;top:375.0px;font-size:6.6px">Franks, Melinda (14964)</span>
<span class="c" style="left:465.4px;top:375.0px;font-size:6.6px">RN</span>
<span class="c r" style="left:502.6px;width:80px;top:375.0px;font-size:6.6px">93</span>
<span class="c" style="left:343.5px;top:384.9px;font-size:6.6px">Irwin, Maggie (27260)</span>
<span class="c" style="left:465.4px;top:384.9px;font-size:6.6px">RN</span>
<span class="c r" style="left:502.6px;width:80px;top:384.9px;font-size:6.6px">88</span>
<div class="st" style="left:340px;top:394.9px;width:253.79999999999995px;height:10.0px"></div>
<span class="c" style="left:343.5px;top:394.9px;font-size:6.6px">Collins, Forrest (19256)</span>
<span class="c" style="left:465.4px;top:394.9px;font-size:6.6px">RN</span>
<span class="c r" style="left:502.6px;width:80px;top:394.9px;font-size:6.6px">87</span>
<span class="c" style="left:343.5px;top:404.9px;font-size:6.6px">Bradshaw, Rosa (30856)</span>
<span class="c" style="left:465.4px;top:404.9px;font-size:6.6px">RN</span>
<span class="c r" style="left:502.6px;width:80px;top:404.9px;font-size:6.6px">82</span>
<div class="st" style="left:340px;top:414.9px;width:253.79999999999995px;height:10.0px"></div>
<span class="c" style="left:343.5px;top:414.9px;font-size:6.6px">Alvarado, Carol (6032)</span>
<span class="c" style="left:465.4px;top:414.9px;font-size:6.6px">RN</span>
<span class="c r" style="left:502.6px;width:80px;top:414.9px;font-size:6.6px">79</span>
<span class="c" style="left:343.5px;top:424.9px;font-size:6.6px">Mcdowell, Hubert (11252)</span>
<span class="c" style="left:465.4px;top:424.9px;font-size:6.6px">Admin</span>
<span class="c r" style="left:502.6px;width:80px;top:424.9px;font-size:6.6px">75</span>
</div></body></html>
